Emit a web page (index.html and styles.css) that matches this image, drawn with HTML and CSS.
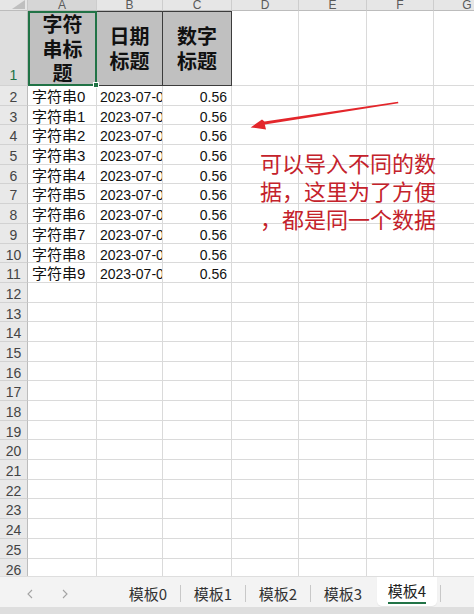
FILE: index.html
```html
<!DOCTYPE html>
<html lang="zh-CN">
<head>
<meta charset="utf-8">
<title>模板4</title>
<link rel="stylesheet" href="styles.css">
</head>
<body>
<div class="app">
  <div class="sheet">
    <div class="grid">
      <div class="corner"><span class="tri"></span></div>
      <div class="ch sel">A</div><div class="ch">B</div><div class="ch">C</div><div class="ch">D</div><div class="ch">E</div><div class="ch">F</div><div class="ch">G</div>

      <div class="rh rh1">1</div>
      <div class="hd a1">字符<br>串标<br>题<span class="handle"></span></div>
      <div class="hd">日期<br>标题</div>
      <div class="hd">数字<br>标题</div>
      <div class="c"></div><div class="c"></div><div class="c"></div><div class="c"></div>

      <div class="rh">2</div><div class="c s">字符串0</div><div class="c">2023-07-0</div><div class="c r">0.56</div><div class="c"></div><div class="c"></div><div class="c"></div><div class="c"></div>
      <div class="rh">3</div><div class="c s">字符串1</div><div class="c">2023-07-0</div><div class="c r">0.56</div><div class="c"></div><div class="c"></div><div class="c"></div><div class="c"></div>
      <div class="rh">4</div><div class="c s">字符串2</div><div class="c">2023-07-0</div><div class="c r">0.56</div><div class="c"></div><div class="c"></div><div class="c"></div><div class="c"></div>
      <div class="rh">5</div><div class="c s">字符串3</div><div class="c">2023-07-0</div><div class="c r">0.56</div><div class="c"></div><div class="c"></div><div class="c"></div><div class="c"></div>
      <div class="rh">6</div><div class="c s">字符串4</div><div class="c">2023-07-0</div><div class="c r">0.56</div><div class="c"></div><div class="c"></div><div class="c"></div><div class="c"></div>
      <div class="rh">7</div><div class="c s">字符串5</div><div class="c">2023-07-0</div><div class="c r">0.56</div><div class="c"></div><div class="c"></div><div class="c"></div><div class="c"></div>
      <div class="rh">8</div><div class="c s">字符串6</div><div class="c">2023-07-0</div><div class="c r">0.56</div><div class="c"></div><div class="c"></div><div class="c"></div><div class="c"></div>
      <div class="rh">9</div><div class="c s">字符串7</div><div class="c">2023-07-0</div><div class="c r">0.56</div><div class="c"></div><div class="c"></div><div class="c"></div><div class="c"></div>
      <div class="rh">10</div><div class="c s">字符串8</div><div class="c">2023-07-0</div><div class="c r">0.56</div><div class="c"></div><div class="c"></div><div class="c"></div><div class="c"></div>
      <div class="rh">11</div><div class="c s">字符串9</div><div class="c">2023-07-0</div><div class="c r">0.56</div><div class="c"></div><div class="c"></div><div class="c"></div><div class="c"></div>

      <div class="rh">12</div><div class="c"></div><div class="c"></div><div class="c"></div><div class="c"></div><div class="c"></div><div class="c"></div><div class="c"></div>
      <div class="rh">13</div><div class="c"></div><div class="c"></div><div class="c"></div><div class="c"></div><div class="c"></div><div class="c"></div><div class="c"></div>
      <div class="rh">14</div><div class="c"></div><div class="c"></div><div class="c"></div><div class="c"></div><div class="c"></div><div class="c"></div><div class="c"></div>
      <div class="rh">15</div><div class="c"></div><div class="c"></div><div class="c"></div><div class="c"></div><div class="c"></div><div class="c"></div><div class="c"></div>
      <div class="rh">16</div><div class="c"></div><div class="c"></div><div class="c"></div><div class="c"></div><div class="c"></div><div class="c"></div><div class="c"></div>
      <div class="rh">17</div><div class="c"></div><div class="c"></div><div class="c"></div><div class="c"></div><div class="c"></div><div class="c"></div><div class="c"></div>
      <div class="rh">18</div><div class="c"></div><div class="c"></div><div class="c"></div><div class="c"></div><div class="c"></div><div class="c"></div><div class="c"></div>
      <div class="rh">19</div><div class="c"></div><div class="c"></div><div class="c"></div><div class="c"></div><div class="c"></div><div class="c"></div><div class="c"></div>
      <div class="rh">20</div><div class="c"></div><div class="c"></div><div class="c"></div><div class="c"></div><div class="c"></div><div class="c"></div><div class="c"></div>
      <div class="rh">21</div><div class="c"></div><div class="c"></div><div class="c"></div><div class="c"></div><div class="c"></div><div class="c"></div><div class="c"></div>
      <div class="rh">22</div><div class="c"></div><div class="c"></div><div class="c"></div><div class="c"></div><div class="c"></div><div class="c"></div><div class="c"></div>
      <div class="rh">23</div><div class="c"></div><div class="c"></div><div class="c"></div><div class="c"></div><div class="c"></div><div class="c"></div><div class="c"></div>
      <div class="rh">24</div><div class="c"></div><div class="c"></div><div class="c"></div><div class="c"></div><div class="c"></div><div class="c"></div><div class="c"></div>
      <div class="rh">25</div><div class="c"></div><div class="c"></div><div class="c"></div><div class="c"></div><div class="c"></div><div class="c"></div><div class="c"></div>
      <div class="rh">26</div><div class="c"></div><div class="c"></div><div class="c"></div><div class="c"></div><div class="c"></div><div class="c"></div><div class="c"></div>
    </div>

    <svg class="arrow" width="474" height="576" viewBox="0 0 474 576" aria-hidden="true">
      <path d="M398,101.8 L264.5,121.4 L262,119.6 L250.6,127.4 L266,129.4 L264.8,124.6 L398.4,103.2 Z" fill="#e3262b"/>
    </svg>

    <div class="note">
      <span class="line">可以导入不同的数</span>
      <span class="line">据，这里为了方便</span>
      <span class="line">，都是同一个数据</span>
    </div>
  </div>

  <div class="tabs">
    <div class="nav">
      <svg width="8" height="10" viewBox="0 0 8 10" aria-hidden="true"><path d="M6,1 L2,5 L6,9" fill="none" stroke="#a3a3a3" stroke-width="1.1"/></svg>
      <svg width="8" height="10" viewBox="0 0 8 10" aria-hidden="true"><path d="M2,1 L6,5 L2,9" fill="none" stroke="#a3a3a3" stroke-width="1.1"/></svg>
    </div>
    <div class="tab">模板0</div><span class="sep"></span>
    <div class="tab">模板1</div><span class="sep"></span>
    <div class="tab">模板2</div><span class="sep"></span>
    <div class="tab">模板3</div>
    <div class="tab active"><span class="lbl">模板4</span></div><span class="sep"></span>
  </div>
</div>
</body>
</html>
```

FILE: styles.css
```css
* {
  box-sizing: border-box;
  margin: 0;
  padding: 0;
}

html, body {
  width: 474px;
  height: 614px;
  overflow: hidden;
  background: #ffffff;
}

body {
  font-family: "Liberation Sans", "Noto Sans CJK SC", sans-serif;
  color: #1f1f1f;
}

.app {
  display: flex;
  flex-direction: column;
  height: 614px;
}

.sheet {
  position: relative;
  flex: none;
  height: 576px;
  overflow: hidden;
}

.grid {
  display: grid;
  grid-template-columns: 28px 69px 66px 69px 67px 68px 67px 67px;
  grid-template-rows: 11px 75px;
  grid-auto-rows: 19.7px;
  width: 501px;
}

.corner {
  display: flex;
  justify-content: flex-end;
  align-items: flex-end;
  padding: 0 2px 1px 0;
  background: #e6e6e6;
  border-right: 1px solid #c8c8c8;
  border-bottom: 1px solid #bcbcbc;
}

.tri {
  width: 13px;
  height: 9px;
  background: #bfbfbf;
  clip-path: polygon(100% 0, 100% 100%, 0 100%);
}

.ch {
  background: #e6e6e6;
  border-right: 1px solid #cdcdcd;
  border-bottom: 1px solid #bcbcbc;
  text-align: center;
  font-size: 12px;
  line-height: 10px;
  color: #5a5a5a;
}

.ch.sel {
  background: #d6d6d6;
}

.rh {
  background: #e9e9e9;
  border-right: 1px solid #bcbcbc;
  border-bottom: 1px solid #d2d2d2;
  text-align: center;
  font-size: 14px;
  line-height: 18px;
  padding-top: 2px;
  color: #444444;
  overflow: hidden;
}

.rh1 {
  display: flex;
  align-items: flex-end;
  justify-content: center;
  padding: 0 0 1px 0;
  color: #217346;
  background: #dedede;
}

.hd {
  display: flex;
  align-items: center;
  justify-content: center;
  text-align: center;
  background: #c0c0c0;
  border-top: 1px solid #3c3c3c;
  border-right: 1px solid #3c3c3c;
  border-bottom: 1px solid #3c3c3c;
  font-family: "Noto Sans CJK SC", sans-serif;
  font-weight: 700;
  font-size: 20px;
  line-height: 24.5px;
  color: #111111;
}

.a1 {
  position: relative;
  border: 2px solid #217346;
  padding-top: 1px;
}

.handle {
  position: absolute;
  right: -4px;
  bottom: -4px;
  width: 6px;
  height: 6px;
  background: #217346;
  border: 1px solid #ffffff;
}

.c {
  border-right: 1px solid #dadada;
  border-bottom: 1px solid #dadada;
  font-size: 14px;
  line-height: 18px;
  padding: 2px 3px 0 3px;
  white-space: nowrap;
  overflow: hidden;
  color: #111111;
}

.c.s {
  font-size: 15px;
  padding-left: 4px;
}

.c.r {
  text-align: right;
  padding-right: 4px;
}

.arrow {
  position: absolute;
  left: 0;
  top: 0;
  pointer-events: none;
}

.note {
  position: absolute;
  left: 260px;
  top: 148px;
  font-family: "Noto Sans CJK SC", sans-serif;
  font-size: 22px;
  line-height: 28px;
  color: #c4222b;
}

.note .line {
  display: block;
  white-space: nowrap;
}

.tabs {
  flex: none;
  height: 38px;
  display: flex;
  align-items: stretch;
  background: #f3f3f3;
  border-top: 1px solid #dedede;
  border-bottom: 7px solid #dedede;
}

.nav {
  width: 116px;
  display: flex;
  align-items: center;
  gap: 27px;
  padding: 3px 0 0 26px;
}

.tab {
  width: 64px;
  display: flex;
  align-items: center;
  justify-content: center;
  padding-top: 4px;
  font-family: "Noto Sans CJK SC", sans-serif;
  font-size: 15px;
  line-height: 20px;
  color: #333333;
}

.tab.active {
  width: 60px;
  margin: 0 3px 1px 2px;
  padding-top: 0;
  background: #ffffff;
  border-radius: 0 0 5px 5px;
  box-shadow: 0 1px 1px rgba(0, 0, 0, 0.06);
  color: #222222;
}

.tab.active .lbl {
  border-bottom: 2.5px solid #217346;
  padding-top: 1px;
  padding-bottom: 1px;
}

.sep {
  width: 1px;
  height: 17px;
  align-self: center;
  margin-top: 3px;
  background: #c8c8c8;
}
```
